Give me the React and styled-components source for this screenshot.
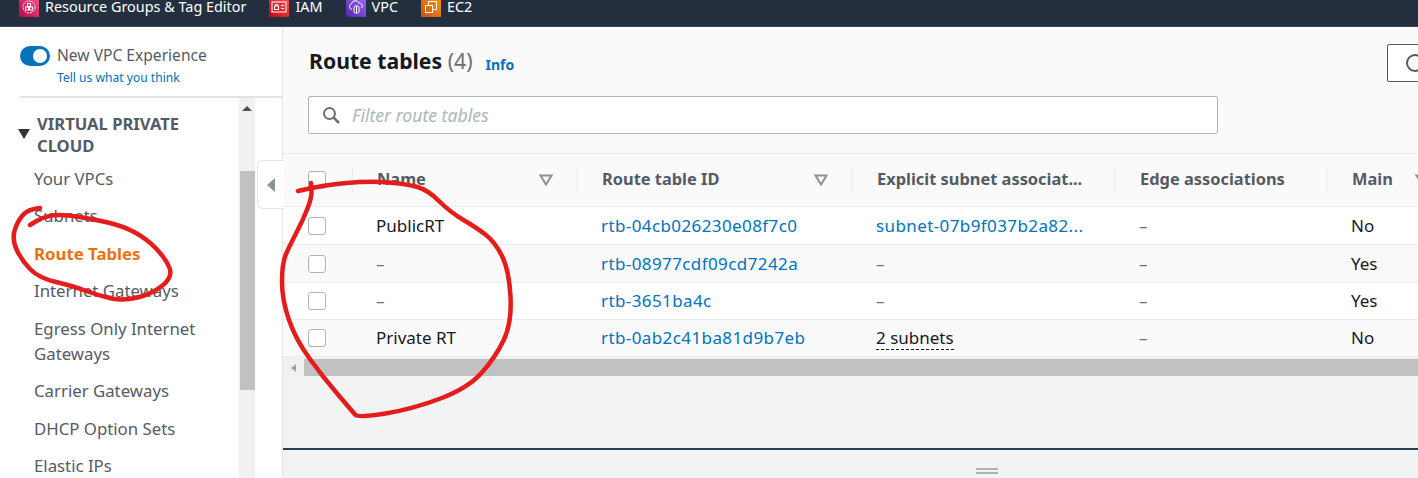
import React from 'react';
import styled, { createGlobalStyle } from 'styled-components';

const GlobalStyle = createGlobalStyle`
    html, body {
        margin: 0;
        padding: 0;
        height: 478px;
        overflow: hidden;
        background: #fff;
    }
    body {
        font-family: "Noto Sans", "Open Sans", sans-serif;
        color: #16191f;
    }
    * {
        box-sizing: border-box;
    }
`;

const Page = styled.div`
    position: relative;
    display: flex;
    flex-direction: column;
    width: 1418px;
    height: 478px;
    overflow: hidden;
`;

const TopBar = styled.div`
    display: flex;
    flex: none;
    gap: 23px;
    height: 27px;
    padding-left: 19px;
    background: #232f3e;
    border-bottom: 1px solid #3b4552;
    overflow: hidden;
`;

const Service = styled.div`
    display: flex;
    gap: 6px;
    height: 17px;
    color: #fff;
    font-size: 14.4px;
    line-height: 14px;
`;

const ServiceIcon = styled.span`
    display: flex;
    align-items: center;
    justify-content: center;
    width: 20px;
    height: 20px;
    margin-top: -3px;
    background: ${props => props.bg};
`;

const Body = styled.div`
    display: flex;
    flex: 1;
    min-height: 0;
`;

const Side = styled.div`
    display: flex;
    flex: none;
    flex-direction: column;
    width: 283px;
    padding-top: 16px;
    background: #fff;
    border-right: 1px solid #e4e6e6;
`;

const Experience = styled.div`
    display: flex;
    flex: none;
    gap: 7px;
    height: 55px;
    margin-left: 20px;
    padding-top: 3px;
    border-bottom: 2px solid #e2e3e3;
`;

const Toggle = styled.span`
    position: relative;
    flex: none;
    width: 30px;
    height: 20px;
    border-radius: 10px;
    background: #0073bb;
    &::after {
        content: '';
        position: absolute;
        top: 3px;
        right: 3px;
        width: 14px;
        height: 14px;
        border-radius: 50%;
        background: #fff;
    }
`;

const ExperienceTitle = styled.div`
    margin-top: -1px;
    font-size: 15.6px;
    line-height: 20px;
    color: #545b64;
`;

const ExperienceLink = styled.div`
    margin-top: 4px;
    font-size: 12.1px;
    line-height: 18px;
    color: #0073bb;
`;

const SideLower = styled.div`
    display: flex;
    flex: 1;
    min-height: 0;
`;

const NavList = styled.div`
    flex: none;
    width: 239px;
    padding: 15px 0 0 34px;
    overflow: hidden;
`;

const Heading = styled.div`
    position: relative;
    max-width: 170px;
    margin: 0 0 8.5px 3px;
    font-size: 16.6px;
    line-height: 22px;
    font-weight: 700;
    color: #545b64;
    &::before {
        content: '';
        position: absolute;
        top: 16px;
        left: -19px;
        border-style: solid;
        border-width: 10px 6px 0;
        border-color: #2f353d transparent transparent;
    }
`;

const NavItem = styled.div`
    margin-bottom: 12.5px;
    font-size: 16.8px;
    line-height: 25px;
    color: ${props => (props.active ? '#ec7211' : '#545b64')};
    font-weight: ${props => (props.active ? 700 : 400)};
`;

const ScrollTrack = styled.div`
    position: relative;
    flex: none;
    width: 16px;
    background: #f1f1f1;
    &::before {
        content: '';
        position: absolute;
        top: 8px;
        left: 3px;
        border-style: solid;
        border-width: 0 5px 5px;
        border-color: transparent transparent #505050;
    }
`;

const ScrollThumb = styled.div`
    width: 15px;
    height: 219px;
    margin: 73px 0 0 1px;
    background: #c1c1c1;
`;

const Collapse = styled.div`
    position: absolute;
    top: 160px;
    left: 257px;
    display: flex;
    align-items: center;
    width: 27px;
    height: 49px;
    padding-left: 9px;
    background: #fff;
    border: 1px solid #e4e6e6;
    border-right: none;
    border-radius: 6px 0 0 6px;
    &::before {
        content: '';
        border-style: solid;
        border-width: 7px 8px 7px 0;
        border-color: transparent #879596 transparent transparent;
    }
`;

const Main = styled.div`
    display: flex;
    flex: 1;
    flex-direction: column;
    min-width: 0;
    background: #f2f3f3;
    overflow: hidden;
`;

const PanelHead = styled.div`
    flex: none;
    height: 126px;
    padding: 16px 0 0 25px;
    background: #fafafa;
`;

const TitleRow = styled.div`
    display: flex;
    align-items: center;
    height: 39px;
    margin-bottom: 14px;
`;

const Title = styled.h1`
    margin: 0 0 4px 1px;
    font-size: 21.2px;
    line-height: 38px;
    font-weight: 700;
    color: #16191f;
`;

const Count = styled.span`
    font-weight: 400;
    color: #687078;
`;

const Info = styled.span`
    margin: 3px 0 0 13px;
    font-size: 14px;
    font-weight: 700;
    color: #0073bb;
`;

const RefreshButton = styled.div`
    display: flex;
    align-items: center;
    flex: none;
    width: 60px;
    height: 38px;
    margin-left: auto;
    margin-right: -29px;
    padding-left: 16px;
    background: #fff;
    border: 1px solid #545b64;
    border-radius: 2px;
    color: #545b64;
`;

const Search = styled.div`
    display: flex;
    align-items: center;
    gap: 12px;
    width: 910px;
    height: 38px;
    padding-left: 13px;
    background: #fff;
    border: 1px solid #aab7b8;
    border-radius: 2px;
`;

const Placeholder = styled.span`
    font-size: 17.6px;
    font-style: italic;
    color: #aab7b8;
`;

const Table = styled.div`
    flex: none;
    width: 1170px;
`;

const Row = styled.div`
    display: grid;
    grid-template-columns: 69px 225px 275px 262px 212px 127px;
    align-items: center;
    height: ${props => props.h}px;
    background: ${props => props.bg};
    border-top: 1px solid #eaeded;
`;

const HeadCell = styled.div`
    display: flex;
    align-items: center;
    justify-content: space-between;
    height: 26px;
    padding: 0 24px 0 ${props => (props.shift ? 25 : 24)}px;
    font-size: 16.4px;
    font-weight: 700;
    color: #545b64;
    border-left: 1px solid #eaeded;
    white-space: nowrap;
`;

const HeadLabel = styled.span`
    margin-bottom: 4px;
`;

const Cell = styled.div`
    margin-bottom: 1px;
    padding-left: ${props => (props.shift ? 25 : 24)}px;
    font-size: 17px;
    letter-spacing: ${props => (props.code ? '0.4px' : '0')};
    color: ${props => props.color || '#16191f'};
    white-space: nowrap;
`;

const CheckCell = styled.div`
    padding-left: 25px;
`;

const Checkbox = styled.div`
    width: 18px;
    height: 18px;
    background: #fff;
    border: 1px solid #aab7b8;
    border-radius: 3px;
`;

const Dashed = styled.span`
    border-bottom: 1px dashed #16191f;
`;

const HScroll = styled.div`
    display: flex;
    flex: none;
    align-items: center;
    height: 20px;
    padding-top: 2px;
    background: #f1f1f1;
    border-top: 1px solid #eaeded;
`;

const HArrow = styled.span`
    flex: none;
    width: 21px;
    padding-left: 8px;
    &::before {
        content: '';
        display: block;
        width: 0;
        border-style: solid;
        border-width: 4px 5px 4px 0;
        border-color: transparent #a3a3a3 transparent transparent;
    }
`;

const HThumb = styled.div`
    flex: 1;
    height: 17px;
    background: #c1c1c1;
`;

const Gap = styled.div`
    flex: none;
    height: 72px;
`;

const Splitter = styled.div`
    display: flex;
    flex: 1;
    justify-content: center;
    padding: 18px 0 0 272px;
    border-top: 2px solid #2b4054;
`;

const Handle = styled.div`
    width: 22px;
    height: 6px;
    border-top: 2px solid #b0b2b2;
    border-bottom: 2px solid #b0b2b2;
`;

const Scribble = styled.svg`
    position: absolute;
    top: 0;
    left: 0;
    pointer-events: none;
`;

const SortCaret = () => (
    <svg width="14" height="12" viewBox="0 0 14 12">
        <path d="M1.5 1.5h11L7 10.5z" fill="none" stroke="#879596" strokeWidth="2" />
    </svg>
);

const smooth = pts => {
    let d = `M${pts[0][0]} ${pts[0][1]}`;
    for (let i = 1; i < pts.length - 1; i++) {
        const mx = (pts[i][0] + pts[i + 1][0]) / 2;
        const my = (pts[i][1] + pts[i + 1][1]) / 2;
        d += ` Q${pts[i][0]} ${pts[i][1]} ${mx} ${my}`;
    }
    const last = pts[pts.length - 1];
    return `${d} L${last[0]} ${last[1]}`;
};

const sideLoop = [
    [40, 208], [28, 209], [17, 222], [12, 240], [22, 261], [39, 278], [73, 286], [100, 296], [123, 301], [152, 294],
    [173, 277], [166, 259], [147, 239], [123, 226], [93, 219], [60, 214], [43, 217], [30, 225],
];

const tableLoop = [
    [298, 191], [323, 185], [370, 181], [407, 184], [428, 190], [450, 212], [477, 228], [495, 242], [509, 270], [512, 323],
    [495, 358], [468, 388], [413, 409], [358, 418], [352, 411], [323, 377], [296, 340], [282, 300], [282, 263], [290, 245],
    [303, 220], [312, 197], [311, 183],
];

const columns = ['Name', 'Route table ID', 'Explicit subnet associat...', 'Edge associations', 'Main'];

const rows = [
    { name: 'PublicRT', id: 'rtb-04cb026230e08f7c0', subnet: 'subnet-07b9f037b2a82...', main: 'No', h: 38, bg: '#fff' },
    { name: '–', id: 'rtb-08977cdf09cd7242a', subnet: '–', main: 'Yes', h: 38, bg: '#fafafa' },
    { name: '–', id: 'rtb-3651ba4c', subnet: '–', main: 'Yes', h: 37, bg: '#fff' },
    { name: 'Private RT', id: 'rtb-0ab2c41ba81d9b7eb', subnet: '2 subnets', main: 'No', h: 37, bg: '#fafafa' },
];

const navItems = ['Your VPCs', 'Subnets', 'Route Tables', 'Internet Gateways', 'Egress Only Internet Gateways', 'Carrier Gateways', 'DHCP Option Sets', 'Elastic IPs'];

const renderSubnet = subnet => {
    if (subnet === '–') return <Cell color="#687078">–</Cell>;
    if (subnet === '2 subnets') return <Cell><Dashed>{subnet}</Dashed></Cell>;
    return <Cell code color="#0073bb">{subnet}</Cell>;
};

const App = () => (
    <Page>
        <GlobalStyle />
        <TopBar>
            <Service>
                <ServiceIcon bg="linear-gradient(45deg, #b0084d, #ff4f8b)">
                    <svg width="14" height="14" viewBox="0 0 14 14" fill="none" stroke="#fff" strokeWidth="1">
                        <circle cx="7" cy="7" r="6" strokeDasharray="2 1" />
                        <rect x="3.5" y="7" width="3" height="3" />
                        <rect x="7.5" y="7" width="3" height="3" />
                        <rect x="5.5" y="3.5" width="3" height="3" />
                    </svg>
                </ServiceIcon>
                Resource Groups &amp; Tag Editor
            </Service>
            <Service>
                <ServiceIcon bg="linear-gradient(45deg, #bd0816, #ff5252)">
                    <svg width="16" height="12" viewBox="0 0 16 12" fill="none" stroke="#fff" strokeWidth="1">
                        <rect x="1" y="1" width="14" height="10" />
                        <rect x="3.5" y="5" width="4" height="3.5" />
                        <path d="M4.5 5V3.5h2V5M10 4.5h3M10 7.5h3" />
                    </svg>
                </ServiceIcon>
                IAM
            </Service>
            <Service>
                <ServiceIcon bg="linear-gradient(45deg, #4d27a8, #a166ff)">
                    <svg width="16" height="16" viewBox="0 0 16 16" fill="none" stroke="#fff" strokeWidth="1">
                        <path d="M4 10.5a3 3 0 0 1-.5-5.8A4 4 0 0 1 11 4a3 3 0 0 1 2.5 5" />
                        <rect x="6" y="7" width="5" height="7" rx="1.5" />
                        <path d="M8.5 7v7" />
                    </svg>
                </ServiceIcon>
                VPC
            </Service>
            <Service>
                <ServiceIcon bg="linear-gradient(45deg, #c8511b, #ff9900)">
                    <svg width="16" height="16" viewBox="0 0 16 16" fill="none" stroke="#fff" strokeWidth="1">
                        <rect x="2.5" y="6.5" width="7" height="7" />
                        <path d="M5.5 6.5V2.5h8v8h-4" />
                    </svg>
                </ServiceIcon>
                EC2
            </Service>
        </TopBar>
        <Body>
            <Side>
                <Experience>
                    <Toggle />
                    <div>
                        <ExperienceTitle>New VPC Experience</ExperienceTitle>
                        <ExperienceLink>Tell us what you think</ExperienceLink>
                    </div>
                </Experience>
                <SideLower>
                    <NavList>
                        <Heading>VIRTUAL PRIVATE CLOUD</Heading>
                        {navItems.map(item => (
                            <NavItem key={item} active={item === 'Route Tables'}>
                                {item}
                            </NavItem>
                        ))}
                    </NavList>
                    <ScrollTrack>
                        <ScrollThumb />
                    </ScrollTrack>
                </SideLower>
            </Side>
            <Main>
                <PanelHead>
                    <TitleRow>
                        <Title>
                            Route tables <Count>(4)</Count>
                        </Title>
                        <Info>Info</Info>
                        <RefreshButton>
                            <svg width="22" height="22" viewBox="0 0 22 22" fill="none" stroke="#545b64" strokeWidth="2">
                                <circle cx="11" cy="11" r="8" />
                            </svg>
                        </RefreshButton>
                    </TitleRow>
                    <Search>
                        <svg width="18" height="18" viewBox="0 0 18 18" fill="none" stroke="#687078" strokeWidth="2">
                            <circle cx="7.5" cy="7.5" r="5.5" />
                            <path d="M11.5 11.5 17 17" strokeWidth="2.5" />
                        </svg>
                        <Placeholder>Filter route tables</Placeholder>
                    </Search>
                </PanelHead>
                <Table>
                    <Row bg="#fafafa" h={53}>
                        <CheckCell>
                            <Checkbox />
                        </CheckCell>
                        {columns.map((col, i) => (
                            <HeadCell key={col} shift={i > 2}>
                                <HeadLabel>{col}</HeadLabel>
                                {i !== 2 && i !== 3 && <SortCaret />}
                            </HeadCell>
                        ))}
                    </Row>
                    {rows.map(row => (
                        <Row key={row.id} h={row.h} bg={row.bg}>
                            <CheckCell>
                                <Checkbox />
                            </CheckCell>
                            <Cell color={row.name === '–' ? '#687078' : undefined}>{row.name}</Cell>
                            <Cell code color="#0073bb">{row.id}</Cell>
                            {renderSubnet(row.subnet)}
                            <Cell shift color="#687078">–</Cell>
                            <Cell shift>{row.main}</Cell>
                        </Row>
                    ))}
                </Table>
                <HScroll>
                    <HArrow />
                    <HThumb />
                </HScroll>
                <Gap />
                <Splitter>
                    <Handle />
                </Splitter>
            </Main>
        </Body>
        <Collapse />
        <Scribble width="1418" height="478" fill="none" stroke="#e61c1c" strokeWidth="4.5" strokeLinecap="round" strokeLinejoin="round">
            <path d={smooth(sideLoop)} />
            <path d={smooth(tableLoop)} />
        </Scribble>
    </Page>
);

export default App;
